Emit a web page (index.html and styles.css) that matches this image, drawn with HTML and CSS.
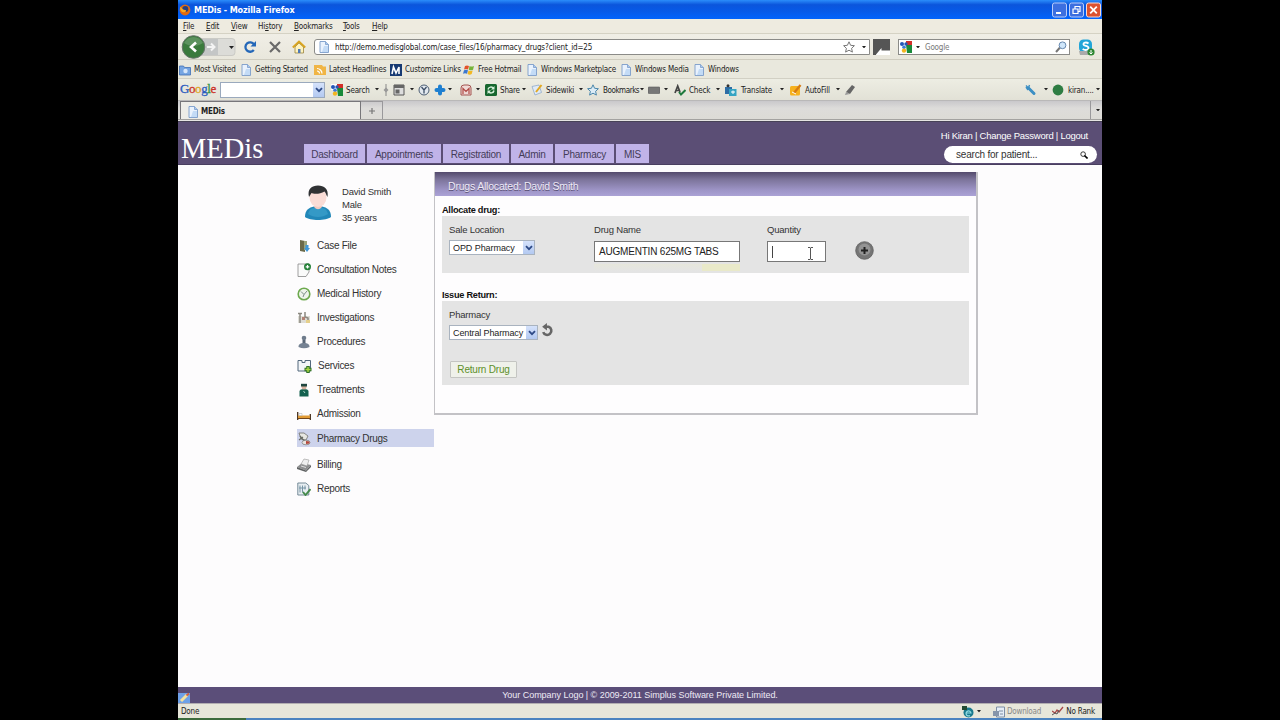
FILE: index.html
```html
<!DOCTYPE html>
<html lang="en">
<head>
    <meta charset="UTF-8">
    <title>MEDis - Mozilla Firefox</title>
    <link rel="stylesheet" href="styles.css">
</head>
<body>

    <!-- Shared icons -->
    <svg class="sprite" width="0" height="0">
        <symbol id="file" viewBox="0 0 12 12"><path d="M2 .5h5.5l3 3v8H2z" fill="#e9f2fd" stroke="#7b9cc9" stroke-width=".9"/><path d="M7.5.5v3h3" fill="#a9c9f0" stroke="#7b9cc9" stroke-width=".8"/><path d="M6 5h4v6H4z" fill="#c3dbf6"/></symbol>
        <symbol id="goog" viewBox="0 0 12 12"><path d="M0 0h6v6H0z" fill="#fff"/><path d="M6 0h6v4H6z" fill="#d32f2a"/><path d="M6 4h6v8H7z" fill="#198a3a"/><circle cx="2" cy="3" r="2" fill="#2456b8"/><circle cx="6" cy="3" r="1.7" fill="#2456b8"/><circle cx="4" cy="6.3" r="1.8" fill="#3a7adb"/><circle cx="4" cy="9.6" r="2.2" fill="#f2b51f"/></symbol>
        <symbol id="caret" viewBox="0 0 5 3"><path d="M0 0h5L2.5 3z" fill="#222"/></symbol>
        <symbol id="chev" viewBox="0 0 8 6"><path d="M1 1.2l3 3 3-3" fill="none" stroke="#2e4a86" stroke-width="1.8"/></symbol>
        <symbol id="star" viewBox="0 0 12 12"><path d="M6 .8l1.6 3.5 3.8.4-2.8 2.6.8 3.8L6 9.2l-3.4 1.9.8-3.8L.6 4.7l3.8-.4z"/></symbol>
    </svg>

    <div class="screen">

        <!-- Window title -->
        <div class="titlebar">
            <svg class="i12" viewBox="0 0 12 12"><circle cx="6" cy="6" r="5.4" fill="#e06a12"/><circle cx="6.3" cy="5" r="3" fill="#243f80"/><path d="M1 3c2 0 2 3 5 3 1 0 2 1 0 2-3 1-5-1-5-5z" fill="#f7a823"/></svg>
            <span class="title">MEDis - Mozilla Firefox</span>
            <div class="winbtns">
                <svg viewBox="0 0 15 15"><rect x=".5" y=".5" width="14" height="14" rx="2" fill="#3c6fe0" stroke="#b9cdfa"/><path d="M4 10.5h5" stroke="#fff" stroke-width="2"/></svg>
                <svg viewBox="0 0 15 15"><rect x=".5" y=".5" width="14" height="14" rx="2" fill="#3c6fe0" stroke="#b9cdfa"/><path d="M6 6V4h5v5H9M4 6.500h5v4.500H4z" fill="none" stroke="#fff" stroke-width="1.200"/></svg>
                <svg viewBox="0 0 15 15"><rect x=".5" y=".5" width="14" height="14" rx="2" fill="#dc5230" stroke="#f6d9d2"/><path d="M4.200 4.200l6.600 6.600M10.800 4.200l-6.600 6.600" stroke="#fff" stroke-width="1.800"/></svg>
            </div>
        </div>

        <div class="menubar">
            <span><u>F</u>ile</span><span><u>E</u>dit</span><span><u>V</u>iew</span><span>Hi<u>s</u>tory</span><span><u>B</u>ookmarks</span><span><u>T</u>ools</span><span><u>H</u>elp</span>
        </div>

        <!-- Navigation toolbar -->
        <div class="navbar">
            <svg class="backfwd" viewBox="0 0 57 26"><rect x="14" y="4.500" width="41" height="17" rx="3" fill="#dcdcd8" stroke="#c0c0bc" stroke-width=".7"/><path d="M22 5h16v16H22z" fill="#c4c6c6"/><path d="M27 13h7M31 9.500l3.500 3.500-3.500 3.500" fill="none" stroke="#f4f4f4" stroke-width="2"/><circle cx="13.500" cy="13" r="11.300" fill="#3a7a3c" stroke="#66736a"/><path d="M4 9a10.500 10.500 0 0 1 19 0c-6 4-13 4-19 0z" fill="#5c925e"/><path d="M16 8.500L11 13l5 4.500" fill="none" stroke="#fff" stroke-width="2.600"/><path d="M49 12h5l-2.500 3z" fill="#222"/></svg>
            <svg class="i14" viewBox="0 0 14 14"><path d="M10.800 10a4.700 4.700 0 1 1 .2-5.600" fill="none" stroke="#2467b8" stroke-width="2.300"/><path d="M13 1v5.500H7.500z" fill="#2467b8"/></svg>
            <svg class="i14" viewBox="0 0 14 14"><path d="M2 2l10 10M12 2L2 12" stroke="#6a6a6a" stroke-width="2.200"/></svg>
            <svg class="i14" viewBox="0 0 14 14"><path d="M3 7v6h8.500V7L7 3z" fill="#fff3bd" stroke="#9a8440" stroke-width=".8"/><path d="M.8 7.500L7 1.500l6.200 6" fill="none" stroke="#d8a420" stroke-width="1.900"/><path d="M6 9h2.500v4H6z" fill="#4c79b8"/></svg>
            <div class="urlbox">
                <svg class="i12"><use href="#file"/></svg>
                <span class="url">http://demo.medisglobal.com/case_files/16/pharmacy_drugs?client_id=25</span>
                <svg class="i12 outline"><use href="#star"/></svg>
                <svg class="caret"><use href="#caret"/></svg>
            </div>
            <svg class="tile" viewBox="0 0 17 17"><path d="M0 0h17v16H0z" fill="#555"/><path d="M3 15.500L8.500 9v2.500H17V16H3z" fill="#fff"/></svg>
            <div class="searchbox">
                <svg class="i12"><use href="#goog"/></svg>
                <svg class="caret"><use href="#caret"/></svg>
                <span class="hint">Google</span>
                <svg class="i12" viewBox="0 0 12 12"><path d="M1 11l4-4.500" stroke="#777" stroke-width="2"/><circle cx="7.500" cy="4.300" r="3.400" fill="#cfe6fa" stroke="#6789b0"/></svg>
            </div>
            <svg class="skype" viewBox="0 0 17 17"><rect x="1" y=".5" width="13" height="13" rx="4.500" fill="#23a5d8"/><path d="M10.500 4.500C8.500 2.800 5 3.500 5.500 5.500s5 1 5 3.500-4 2.500-5.800.8" fill="none" stroke="#fff" stroke-width="1.800"/><path d="M1 12h10v4H2z" fill="#aaa"/><circle cx="13" cy="13" r="3.600" fill="#2c8732"/><path d="M13 11v4M11.500 13.500l1.500 1.500 1.500-1.500" stroke="#fff" fill="none"/></svg>
        </div>

        <!-- Bookmarks -->
        <div class="bookmarks">
            <span><svg class="i12" viewBox="0 0 12 12"><path d="M.5 2h4l1 1.500h6V11H.5z" fill="#76a5e2" stroke="#3f6fb5" stroke-width=".8"/><circle cx="6.500" cy="7" r="2.200" fill="#d6e6fa"/></svg>Most Visited</span>
            <span><svg class="i12"><use href="#file"/></svg>Getting Started</span>
            <span><svg class="i12" viewBox="0 0 12 12"><path d="M0 1h8l1 1.500h3V11H0z" fill="#f0b545"/><path d="M3 4.500a5 5 0 0 1 5 5M3 7a2.500 2.500 0 0 1 2.500 2.500" fill="none" stroke="#fff" stroke-width="1.200"/></svg>Latest Headlines</span>
            <span><svg class="i12" viewBox="0 0 12 12"><path d="M0 0h12v12H0z" fill="#173a73"/><path d="M2 10l1.500-7L6 9l3-6v7" fill="none" stroke="#fff" stroke-width="1.600"/></svg>Customize Links</span>
            <span><svg class="i12" viewBox="0 0 12 12"><path d="M2 2q2-1.200 4 0L5 5.500Q3 4.500 1 5.500z" fill="#e3532a"/><path d="M6.500 2q2 1.200 4.500 0L10 5.700q-2 1-4.200 0z" fill="#76b43a"/><path d="M1 6.200q2-1 4 0L4 9.700q-2-1-4 0z" fill="#3d78cf"/><path d="M5.500 6.500q2 1.200 4.200 0l-1 3.500q-2 1.300-4.200 0z" fill="#f2b823"/></svg>Free Hotmail</span>
            <span><svg class="i12"><use href="#file"/></svg>Windows Marketplace</span>
            <span><svg class="i12"><use href="#file"/></svg>Windows Media</span>
            <span><svg class="i12"><use href="#file"/></svg>Windows</span>
        </div>

        <!-- Google toolbar -->
        <div class="gtoolbar">
            <span class="glogo"><b class="gb">G</b><b class="gr">o</b><b class="gy">o</b><b class="gb">g</b><b class="gg">l</b><b class="gr">e</b></span>
            <div class="combo"><i class="drop"><svg><use href="#chev"/></svg></i></div>
            <svg class="i12"><use href="#goog"/></svg>
            <span>Search</span>
            <svg class="caret"><use href="#caret"/></svg>
            <svg class="i6" viewBox="0 0 6 12"><path d="M3 0v12" stroke="#888"/><path d="M3 3.500L.5 6 3 8.500 5.500 6z" fill="#999"/></svg>
            <svg class="i12" viewBox="0 0 12 12"><path d="M1 1h10v10H1z" fill="#ddd" stroke="#555"/><path d="M1 1h10v3H1zM2.500 5.500h4v4h-4z" fill="#666"/></svg>
            <svg class="caret"><use href="#caret"/></svg>
            <svg class="i12" viewBox="0 0 12 12"><circle cx="6" cy="6" r="5" fill="#e3e9ef" stroke="#4d5e73"/><path d="M3.500 3L6 6l2.500-3M6 6v3.500" fill="none" stroke="#3c4e66" stroke-width="1.300"/></svg>
            <svg class="i12" viewBox="0 0 12 12"><path d="M6 2.500v7M2.500 6h7" stroke="#1e7fd0" stroke-width="4" stroke-linecap="round"/></svg>
            <svg class="caret"><use href="#caret"/></svg>
            <svg class="i12" viewBox="0 0 12 12"><path d="M1 11V4q0-3 3-3h4q3 0 3 3v7z" fill="#efd9d5" stroke="#a45450"/><path d="M3 10V4.500l3 3 3-3V10" fill="none" stroke="#b04844" stroke-width="1.200"/></svg>
            <svg class="caret"><use href="#caret"/></svg>
            <svg class="i12" viewBox="0 0 12 12"><rect width="12" height="12" rx="1.500" fill="#17672f"/><path d="M3 5.500a3 3 0 0 1 5.500-1M9 6.500a3 3 0 0 1-5.500 1" fill="none" stroke="#d7f0dc" stroke-width="1.500"/><path d="M9.500 2v3.500H6zM2.500 10V6.500H6z" fill="#d7f0dc"/></svg>
            <span>Share</span>
            <svg class="caret"><use href="#caret"/></svg>
            <svg class="i12" viewBox="0 0 12 12"><path d="M1 2.500L8 1l2.500 7.500L4 11z" fill="#dfeaf7" stroke="#91a9c9" stroke-width=".8"/><path d="M5 8l5.500-7" stroke="#e3a820" stroke-width="2"/></svg>
            <span>Sidewiki</span>
            <svg class="caret"><use href="#caret"/></svg>
            <svg class="i12 bluestar"><use href="#star"/></svg>
            <span class="tight">Bookmarks</span>
            <svg class="caret"><use href="#caret"/></svg>
            <svg class="i12" viewBox="0 0 12 12"><rect y="3" width="12" height="6.500" rx="1" fill="#777" stroke="#5c5c5c" stroke-width=".6"/></svg>
            <svg class="caret"><use href="#caret"/></svg>
            <svg class="i12" viewBox="0 0 12 12"><path d="M1 9l2.700-7L6 8M2 6.500h3" fill="none" stroke="#444" stroke-width="1.700"/><path d="M5 8l2 2.500L11.500 6" fill="none" stroke="#1f7a3d" stroke-width="2"/></svg>
            <span>Check</span>
            <svg class="caret"><use href="#caret"/></svg>
            <svg class="i12" viewBox="0 0 12 12"><path d="M0 3h7v7H0z" fill="#2e6da5"/><path d="M4 5h7.500v7H4z" fill="#35a4c3"/><circle cx="3" cy="1.800" r="1.500" fill="#333"/><path d="M6 8h4M8 6.500V10" stroke="#fff"/></svg>
            <span>Translate</span>
            <svg class="caret"><use href="#caret"/></svg>
            <svg class="i12" viewBox="0 0 12 12"><rect y="2" width="10" height="9.500" rx="1.500" fill="#f6b11d"/><path d="M4 9l6.500-8" stroke="#d67b14" stroke-width="2.300"/><path d="M2 8l4 2" stroke="#fff"/></svg>
            <span>AutoFill</span>
            <svg class="caret"><use href="#caret"/></svg>
            <svg class="i12" viewBox="0 0 12 12"><path d="M2 8l6-7 3 2-5 7z" fill="#666"/><path d="M1 11l1-3 4 2z" fill="#999"/></svg>
            <svg class="i12" viewBox="0 0 12 12"><path d="M3.500 4L9 9.500" stroke="#3c8fc4" stroke-width="3" stroke-linecap="round"/><path d="M1 1.500L3.500 4 4.500 1M1 3l2 3" fill="none" stroke="#3c8fc4" stroke-width="1.400"/></svg>
            <svg class="caret"><use href="#caret"/></svg>
            <svg class="i12" viewBox="0 0 12 12"><circle cx="6" cy="6" r="5.400" fill="#2e7d43"/></svg>
            <span>kiran....</span>
            <svg class="caret"><use href="#caret"/></svg>
        </div>

        <div class="tabstrip">
            <div class="tab"><svg class="i12"><use href="#file"/></svg>MEDis</div>
            <div class="newtab"><svg viewBox="0 0 8 8"><path d="M4 1v6M1 4h6" stroke="#777" stroke-width="1.200"/></svg></div>
            <div class="alltabs"><svg class="caret"><use href="#caret"/></svg></div>
        </div>

        <!-- Application header -->
        <div class="header">
            <div class="logo">MEDis</div>
            <div class="tabs">
                <span>Dashboard</span><span>Appointments</span><span>Registration</span><span>Admin</span><span>Pharmacy</span><span>MIS</span>
            </div>
            <div class="user">
                <div class="links">Hi Kiran | Change Password | Logout</div>
                <div class="patient-search">search for patient...
                    <svg viewBox="0 0 9 9"><circle cx="3.500" cy="3.500" r="2.600" fill="none" stroke="#222"/><path d="M5 5l3.500 3.500" stroke="#000" stroke-width="1.800"/></svg>
                </div>
            </div>
        </div>

        <div class="main">
            <div class="sidebar">
                <div class="person">
                    <svg viewBox="0 0 28 36"><path d="M1 32c0-7 4-9.500 9-10.500h8c5 1 9 3.500 9 10.500-5 4-21 4-26 0z" fill="#2187b8"/><path d="M4 29c6 4 14 4 20 0-1-4-3-6-6-6h-8c-3 0-5 2-6 6z" fill="#3499c6"/><path d="M10 17h8v5q-4 4.500-8 0z" fill="#f3c9c0"/><ellipse cx="14" cy="12.500" rx="8.500" ry="9.500" fill="#f9dcd6"/><path d="M5 12C3 4 8 .5 14 .5S25 4 23.500 12C22 10 22 8 20.500 6.500 16 9.500 9 9 7.500 8z" fill="#303234"/></svg>
                    <div>David Smith<br>Male<br>35 years</div>
                </div>
                <div class="side-item"><svg viewBox="0 0 14 14"><path d="M3 1l5 1v11l-5-1z" fill="#6b6a4a"/><path d="M7 2h3v9H7z" fill="#9ba37b"/><path d="M8.500 6h3v3h1.500l-3 4-3-4h1.500z" fill="#3f98d8"/></svg>Case File</div>
                <div class="side-item"><svg viewBox="0 0 14 14"><path d="M1 1h11v8l-3 4.500H1z" fill="#fafafa" stroke="#888" stroke-width=".8"/><circle cx="10.500" cy="3.800" r="3.500" fill="#27813a"/><path d="M10.500 2v3.600M8.700 3.800h3.600" stroke="#fff" stroke-width="1.200"/></svg>Consultation Notes</div>
                <div class="side-item"><svg viewBox="0 0 14 14"><circle cx="7" cy="7" r="5.800" fill="#edf4ea" stroke="#6da94e" stroke-width="1.600"/><path d="M4 4.500L7 7.500 10 4M7 7.500L6 10" fill="none" stroke="#7b8d85"/></svg>Medical History</div>
                <div class="side-item"><svg viewBox="0 0 14 14"><path d="M1 5h12v7H1z" fill="#deddd6"/><path d="M1 2.500h4M3 3v9M8 1v5l3 1v5" stroke="#8b8880" stroke-width="1.500" fill="none"/><path d="M5 6h3v3H5z" fill="#b18174"/><path d="M9 9h4v3H9z" fill="#e5cf8b"/></svg>Investigations</div>
                <div class="side-item"><svg viewBox="0 0 14 14"><circle cx="7" cy="3" r="2.300" fill="#6f7c8c"/><path d="M5.500 5h3v4h-3z" fill="#596777"/><path d="M1.500 12c0-3 2-4 5.500-4s5.500 1 5.500 4q-5.500 2.500-11 0z" fill="#758293"/></svg>Procedures</div>
                <div class="side-item services"><svg viewBox="0 0 15 14"><path d="M1 1.500h4v2h3v-2h5.500V12H1z" fill="#f2f5f8" stroke="#53687d"/><path d="M11 7v7M7.500 10.500h7" stroke="#2e7026" stroke-width="3.500"/><path d="M11 8v5M8.500 10.500h5" stroke="#a6d541" stroke-width="1.500"/></svg>Services</div>
                <div class="side-item"><svg viewBox="0 0 14 14"><path d="M2.500 13.500V8Q3 6 7 6t4.500 2v5.500z" fill="#14614f"/><circle cx="7" cy="4" r="2.500" fill="#d5b09d"/><path d="M4 3.500V.8h6v2.700z" fill="#20463f"/><path d="M6.500 8l1.500 2" stroke="#a9d3c5"/></svg>Treatments</div>
                <div class="side-item"><svg viewBox="0 0 14 14"><path d="M.7 5v8M13.300 7v6" stroke="#47301c" stroke-width="1.300"/><path d="M1 8.500h12v3H1z" fill="#e09a34"/><path d="M1 11.500h12" stroke="#744619"/><path d="M2 6.500h3v2H2z" fill="#fff" stroke="#aaa" stroke-width=".5"/></svg>Admission</div>
                <div class="side-item active"><svg viewBox="0 0 14 14"><path d="M2 1h5l4 3-2 4-5-1z" fill="#e7e7e2" stroke="#70706b" stroke-width=".8"/><path d="M3 4l5 6M2 8l4-3" stroke="#686b63" stroke-width="1.200"/><ellipse cx="9" cy="10.500" rx="4" ry="2.300" fill="#e9e4df" stroke="#777" stroke-width=".7"/><path d="M9 9l3.500.5v2L9 12z" fill="#b4463b"/></svg>Pharmacy Drugs</div>
                <div class="side-item"><svg viewBox="0 0 14 14"><path d="M0 9l5-4 9 2-5 5.500z" fill="#8d8e8f"/><path d="M4 6l3-5 5 1-2 6z" fill="#efefef" stroke="#999" stroke-width=".6"/><path d="M0 9l9 3.500 5-5.500v2L9 14 0 11z" fill="#5f6162"/><path d="M4 8l5 1.500" stroke="#ddd"/></svg>Billing</div>
                <div class="side-item"><svg viewBox="0 0 14 14"><path d="M.8 1h8l3 2.500V13h-11z" fill="#e8eef2" stroke="#68808d" stroke-width=".9"/><path d="M3 3.500v7M5.500 3.500v7M8 3.500v4M2 6h7" stroke="#7794a5"/><path d="M6 10l2.500 3L13.500 7" fill="none" stroke="#448a4a" stroke-width="1.900"/></svg>Reports</div>
            </div>

            <div class="panel">
                <div class="panel-title">Drugs Allocated: David Smith</div>
                <h2>Allocate drug:</h2>
                <div class="box allocate">
                    <div class="field">
                        <label>Sale Location</label>
                        <div class="select sale">OPD Pharmacy<i class="drop"><svg><use href="#chev"/></svg></i></div>
                    </div>
                    <div class="field">
                        <label>Drug Name</label>
                        <div class="input">AUGMENTIN 625MG TABS</div>
                        <div class="suggest"><i></i></div>
                    </div>
                    <div class="field">
                        <label>Quantity</label>
                        <div class="input qty"><i class="cursor"></i><svg viewBox="0 0 7 13"><path d="M1 .5h2l.5.5.5-.5h2M3.500 1v11M1 12.500h2l.5-.5.5.5h2" fill="none" stroke="#555"/></svg></div>
                    </div>
                    <svg class="add" viewBox="0 0 19 19"><circle cx="9.500" cy="9.500" r="8.800" fill="#757575" stroke="#606060" stroke-width=".8"/><circle cx="9.500" cy="8.500" r="6" fill="#949494"/><path d="M9.500 6v7M6 9.500h7" stroke="#222" stroke-width="2"/></svg>
                </div>
                <h2 class="second">Issue Return:</h2>
                <div class="box return">
                    <label>Pharmacy</label>
                    <div class="line">
                        <div class="select central">Central Pharmacy<i class="drop"><svg><use href="#chev"/></svg></i></div>
                        <svg class="undo" viewBox="0 0 12 13"><path d="M3.500 3.500H7A3.900 3.900 0 1 1 2 8.500" fill="none" stroke="#666" stroke-width="2.400"/><path d="M5.500 0v7L1 3.500z" fill="#666"/></svg>
                    </div>
                    <div class="btn">Return Drug</div>
                </div>
            </div>
        </div>

        <div class="footer">
            <svg class="edit" viewBox="0 0 12 10"><path d="M0 0h12v10H0z" fill="#6ea1e8"/><path d="M3 8l6-6" stroke="#f4e2a0" stroke-width="3"/><path d="M8.500 2.500L11 .5" stroke="#d6603c" stroke-width="2"/></svg>
            Your Company Logo | © 2009-2011 Simplus Software Private Limited.
        </div>

        <div class="status">
            <span class="done">Done</span>
            <svg class="i12" viewBox="0 0 12 12"><circle cx="6.500" cy="6.500" r="5" fill="#18798d"/><path d="M0 0h5v4H0z" fill="#234b31"/><path d="M4 7h5a2.500 2.500 0 1 0-1 2.500" fill="none" stroke="#8fdbe3" stroke-width="1.200"/></svg>
            <svg class="caret"><use href="#caret"/></svg>
            <svg class="i12" viewBox="0 0 12 12"><path d="M3.500 1h8v10h-8z" fill="#e5edf6" stroke="#7d8ea5"/><path d="M0 5h6v5H0z" fill="#8796aa"/><path d="M6 5h4M7 8h3" stroke="#7d8ea5"/></svg>
            <span class="muted">Download</span>
            <svg class="i12 rank" viewBox="0 0 12 12"><path d="M0 5l3 2 2-3 2 2 4-5" fill="none" stroke="#a84848" stroke-width="1.300"/><path d="M0 9l3-2 2 1 2-4" fill="none" stroke="#555"/></svg>
            <span>No Rank</span>
        </div>
        <div class="taskbar"><i></i></div>
    </div>

</body>
</html>
```
FILE: styles.css
```css
body {
    margin: 0;
    background: #000;
    overflow: hidden;
}

.screen {
    width: 924px;
    height: 720px;
    margin: 0 auto;
    display: flex;
    flex-direction: column;
    background: #fdfcfd;
    font: 8px/12px "DejaVu Sans Condensed", "Noto Sans", sans-serif;
    letter-spacing: -0.18px;
    color: #222;
    white-space: nowrap;
    overflow: hidden;
}

.screen > div {
    box-sizing: border-box;
    flex: none;
}

.sprite {
    position: absolute;
}

svg {
    display: block;
    flex: none;
}

.i12 { width: 12px; height: 12px; }
.i14 { width: 14px; height: 14px; }
.i6 { width: 6px; height: 12px; }
.caret { width: 4px; height: 2.5px; }

/* Browser chrome */
.titlebar {
    height: 19px;
    display: flex;
    align-items: center;
    padding: 0 1px;
    background: linear-gradient(#2b8dfb, #0b55dc 25%, #075ae8 60%, #0264fc);
    color: #fff;
}

.title {
    font: bold 9px/12px "DejaVu Sans Condensed", sans-serif;
    letter-spacing: -0.15px;
    margin-left: 3px;
    flex: 1;
}

.winbtns {
    display: flex;
    gap: 2px;
}

.winbtns svg {
    width: 15px;
    height: 16px;
}

.menubar {
    height: 15px;
    display: grid;
    grid-template-columns: 23px 25px 27px 36px 49px 29px 30px;
    align-items: center;
    padding: 1px 0 0 5px;
    background: #eeebe0;
    border-bottom: 1px solid #d5d2c4;
}

.navbar {
    height: 26px;
    display: grid;
    grid-template-columns: 63px 25px 24px 22px 559px 25px 180px 17px;
    align-items: center;
    padding-left: 2px;
    background: linear-gradient(#f0eee6, #e9e7dc);
    border-bottom: 1px solid #cfccbf;
}

.backfwd { width: 57px; height: 26px; }

.urlbox, .searchbox {
    box-sizing: border-box;
    height: 16px;
    display: flex;
    align-items: center;
    background: #fff;
    border: 1px solid #8b8b88;
}

.urlbox {
    width: 556px;
    padding: 0 3px;
    border-radius: 3px 0 0 3px;
}

.url {
    margin-left: 5px;
    padding-top: 2px;
    flex: 1;
    letter-spacing: -0.13px;
}

.outline {
    fill: none;
    stroke: #777;
    margin-right: 7px;
}

.tile { width: 17px; height: 17px; }

.searchbox {
    width: 172px;
    padding: 0 2px 0 1px;
}

.searchbox .caret { margin: 0 5px 0 4px; }
.hint { flex: 1; padding-top: 2px; color: #777; }
.skype { width: 17px; height: 17px; }

.bookmarks {
    height: 19px;
    display: grid;
    grid-template-columns: 61px 74px 76px 73px 63px 94px 73px 60px;
    align-items: center;
    padding: 2px 0 0 1px;
    background: #e9e8dd;
    border-bottom: 1px solid #d2d0c4;
}

.bookmarks span {
    display: flex;
    align-items: center;
    gap: 3px;
}

.gtoolbar {
    height: 22px;
    display: grid;
    grid-template-columns: 40px 111px 15px 29px 8px 10px 17px 8px 16px 14px 12px 16px 9px 15px 22px 9px 15px 33px 8px 16px 37px 8px 16px 10px 15px 27px 9px 16px 39px 10px 15px 31px 8px 181px 19px 8px 16px 28px 4px;
    align-items: center;
    padding-left: 2px;
    background: linear-gradient(#ededE3, #e2e1d6);
    border-bottom: 1px solid #b9b8b8;
}

.gtoolbar span:not(.glogo) {
    padding-top: 2px;
}

.gtoolbar .tight {
    letter-spacing: -0.45px;
}

.glogo {
    font: 13px/16px "Liberation Serif", serif;
    letter-spacing: -0.4px;
    padding-bottom: 1px;
}

.glogo b {
    font-weight: normal;
    -webkit-text-stroke: 0.3px;
}

.gb { color: #2c5cc0; }
.gr { color: #cc3328; }
.gy { color: #dda51f; }
.gg { color: #2e9447; }

.combo {
    box-sizing: border-box;
    width: 105px;
    height: 16px;
    display: flex;
    justify-content: flex-end;
    background: #fff;
    border: 1px solid #9aa9bd;
}

.drop {
    width: 11px;
    display: flex;
    align-items: center;
    justify-content: center;
    background: linear-gradient(#d5e2fb, #b3c9f1);
}

.drop svg {
    width: 8px;
    height: 6px;
}

.bluestar {
    fill: #dcecf6;
    stroke: #4b87ab;
}

.tabstrip {
    height: 19px;
    display: flex;
    background: linear-gradient(#c9c8cb, #dddcda 40%, #dcdbd6);
    border-bottom: 1px solid #a3a2a0;
    box-shadow: 0 1px #e6e5e3;
}

.tab {
    box-sizing: border-box;
    width: 181px;
    margin-left: 2px;
    padding: 2px 0 0 6px;
    display: flex;
    align-items: center;
    gap: 2px;
    font-weight: bold;
    letter-spacing: -0.2px;
    background: #eeede8;
    border: solid #77767a;
    border-width: 1px 1px 0;
}

.newtab {
    width: 21px;
    display: flex;
    align-items: center;
    justify-content: center;
    border: solid #99989b;
    border-width: 1px 1px 0 0;
}

.newtab svg { width: 8px; height: 8px; }

.alltabs {
    width: 6px;
    padding-left: 6px;
    margin-left: auto;
    display: flex;
    align-items: center;
    border-left: 1px solid #99989b;
    padding: 0 0 0 5px;
}

/* Application */
.header, .main, .footer {
    font-family: "Liberation Sans", Arial, sans-serif;
    letter-spacing: -0.2px;
}

.header {
    height: 44px;
    margin-top: 1px;
    display: flex;
    background: #5b4e75;
    border-top: 1px solid #484257;
    border-bottom: 1px solid #493f60;
}

.logo {
    width: 123px;
    padding: 11px 0 0 3px;
    font: 28.5px/32px "Liberation Serif", serif;
    color: #fff;
    box-sizing: border-box;
    letter-spacing: 0;
}

.tabs {
    display: grid;
    grid-template-columns: 61px 74px 66px 42px 59px 33px;
    gap: 2px;
    padding: 22px 0 1px 3px;
}

.tabs span {
    height: 19px;
    background: #c0b3e8;
    color: #443c58;
    font-size: 10px;
    letter-spacing: -0.25px;
    line-height: 21px;
    text-align: center;
}

.user {
    margin-left: auto;
    width: 158px;
    padding-top: 7px;
    color: #fff;
    font-size: 9.5px;
}

.links {
    line-height: 13px;
    padding-right: 14px;
    text-align: right;
    margin-left: -20px;
    letter-spacing: -0.25px;
}

.patient-search {
    box-sizing: border-box;
    width: 153px;
    height: 17px;
    margin-top: 4px;
    padding: 0 9px 0 12px;
    display: flex;
    align-items: center;
    justify-content: space-between;
    background: #fff;
    border-radius: 9px;
    color: #333;
    font-size: 10px;
}

.patient-search svg { width: 8px; height: 8px; }

.main {
    height: 522px;
    display: flex;
    align-items: flex-start;
    padding-left: 119px;
    font-size: 9.5px;
}

.sidebar {
    width: 137px;
    padding-top: 20px;
    font-size: 10px;
    letter-spacing: -0.28px;
    color: #333;
}

.person {
    display: flex;
    gap: 10px;
    padding-left: 7px;
    height: 48px;
    line-height: 13px;
    font-size: 9.5px;
    letter-spacing: -0.2px;
}

.person svg { width: 28px; height: 36px; }

.side-item {
    box-sizing: border-box;
    height: 24px;
    padding-top: 1px;
    display: flex;
    align-items: center;
    gap: 6px;
}

.side-item svg {
    width: 14px;
    height: 14px;
}

.services { gap: 6px; }
.services svg { width: 15px; }

.side-item.active {
    height: 18px;
    margin: 4px 0 5px;
    background: #cdd3ec;
}

.panel {
    box-sizing: border-box;
    width: 544px;
    height: 243px;
    margin-top: 7px;
    border: 1px solid #c3c2c6;
    border-width: 0 2px 2px 1px;
    background: #fefdfe;
}

.panel-title {
    height: 24px;
    line-height: 28px;
    padding-left: 13px;
    font-size: 10.5px;
    color: #eeeaf7;
    text-shadow: 0 1px #5c5378;
    background: linear-gradient(#544a6c, #7b7399 30%, #9d94c6 75%, #aba2d5);
}

h2 {
    margin: 8px 0 0 7px;
    font-size: 9.2px;
    line-height: 12px;
    letter-spacing: -0.27px;
    color: #111;
}

h2.second { margin-top: 16px; }

.box {
    box-sizing: border-box;
    width: 527px;
    margin-left: 7px;
    padding-left: 7px;
    background: #e4e4e4;
}

.allocate {
    height: 57px;
    padding-top: 8px;
    display: grid;
    grid-template-columns: 145px 173px 87.5px 19px;
    align-items: start;
}

label {
    display: block;
    line-height: 11px;
    height: 12px;
    color: #333;
}

.select {
    box-sizing: border-box;
    height: 15px;
    display: flex;
    justify-content: space-between;
    padding-left: 3px;
    font-size: 9px;
    letter-spacing: -0.07px;
    line-height: 14px;
    background: #fff;
    border: 1px solid #a9b3bf;
}

.sale {
    width: 86px;
    margin-top: 4px;
}

.input {
    box-sizing: border-box;
    width: 146px;
    height: 21px;
    margin-top: 5px;
    padding-left: 4px;
    font-size: 10px;
    line-height: 20px;
    background: #fff;
    border: 1px solid #777;
}

.qty {
    width: 59px;
    display: flex;
    align-items: center;
    justify-content: space-between;
    padding-right: 11px;
}

.qty svg {
    width: 7px;
    height: 13px;
    margin-top: 4px;
}

.cursor {
    width: 1px;
    height: 12px;
    background: #444;
}

.suggest {
    width: 146px;
    height: 7px;
    margin-top: 2px;
    display: flex;
    justify-content: flex-end;
    background: linear-gradient(#e7e7db, #e4e4e4);
}

.suggest i {
    width: 38px;
    background: #e9e9c9;
}

.add {
    width: 19px;
    height: 19px;
    margin-top: 17px;
}

.return {
    height: 84px;
    padding-top: 8px;
}

.line {
    display: flex;
    gap: 3px;
    margin-top: 2px;
}

.central {
    width: 89px;
    margin-top: 2px;
    letter-spacing: -0.12px;
}

.undo {
    width: 13px;
    height: 14px;
}

.btn {
    box-sizing: border-box;
    width: 67px;
    height: 17px;
    margin: 21px 0 0 1px;
    line-height: 16px;
    text-align: center;
    font-size: 10px;
    color: #5d9029;
    background: #eff1ea;
    border: 1px solid #c4c5c2;
    border-radius: 1px;
}

.footer {
    height: 16px;
    position: relative;
    background: #5b4e79;
    color: #eeeaf5;
    font-size: 9px;
    line-height: 17px;
    text-align: center;
    letter-spacing: -0.03px;
}

.edit {
    position: absolute;
    left: 0;
    top: 6px;
    width: 12px;
    height: 10px;
}

.status {
    height: 15px;
    display: flex;
    align-items: center;
    padding: 1px 7px 0 3px;
    background: #e7e6da;
    border-top: 1px solid #b2aeb1;
}

.done { flex: 1; }
.status .caret { margin: 0 12px 0 3px; }
.muted { color: #888; margin: 0 11px 0 2px; }
.rank { margin-right: 2px; }

.taskbar {
    height: 2px;
    background: #4b83c0;
}

.taskbar i {
    display: block;
    width: 68px;
    height: 2px;
    background: #3c6b3d;
}
```
